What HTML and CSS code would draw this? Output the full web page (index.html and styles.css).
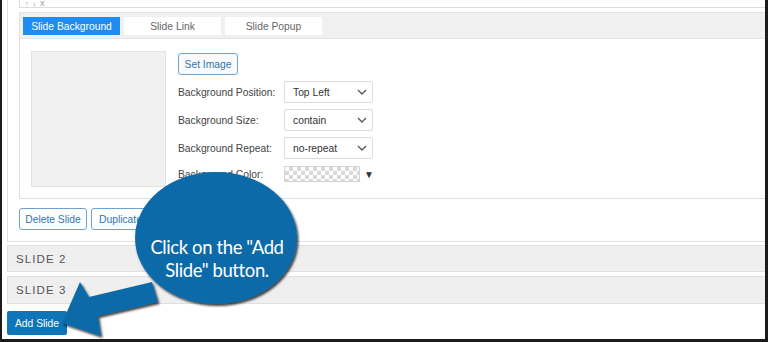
FILE: index.html
```html
<!DOCTYPE html>
<html>
<head>
<meta charset="utf-8">
<link rel="stylesheet" href="styles.css">
</head>
<body>
<div class="frame">
  <div class="panel">
    <div class="topbox"><span class="topicons">↑ ↓ X</span></div>
    <div class="tabs">
      <div class="tab active">Slide Background</div>
      <div class="tab">Slide Link</div>
      <div class="tab">Slide Popup</div>
    </div>
    <div class="content">
      <div class="preview"></div>
      <div class="fields">
        <button class="btn setimg">Set Image</button>
        <div class="row"><span class="label">Background Position:</span><span class="select">Top Left<svg class="chev" width="10" height="6" viewBox="0 0 10 6"><path d="M1 1 L5 5 L9 1" fill="none" stroke="#555" stroke-width="1.3"/></svg></span></div>
        <div class="row"><span class="label">Background Size:</span><span class="select">contain<svg class="chev" width="10" height="6" viewBox="0 0 10 6"><path d="M1 1 L5 5 L9 1" fill="none" stroke="#555" stroke-width="1.3"/></svg></span></div>
        <div class="row"><span class="label">Background Repeat:</span><span class="select">no-repeat<svg class="chev" width="10" height="6" viewBox="0 0 10 6"><path d="M1 1 L5 5 L9 1" fill="none" stroke="#555" stroke-width="1.3"/></svg></span></div>
        <div class="row colorrow"><span class="label">Background Color:</span><span class="swatch"></span><span class="tri">▼</span></div>
      </div>
    </div>
    <div class="actions">
      <button class="btn del">Delete Slide</button>
      <button class="btn">Duplicate Slide</button>
    </div>
  </div>
  <div class="slidebar">SLIDE 2</div>
  <div class="slidebar s3">SLIDE 3</div>
  <button class="addslide">Add Slide</button>

  <svg class="callout" width="768" height="342" viewBox="0 0 768 342">
    <defs>
      <filter id="sh" x="-20%" y="-20%" width="140%" height="140%">
        <feDropShadow dx="1.5" dy="2" stdDeviation="1.2" flood-color="#000" flood-opacity="0.75"/>
      </filter>
    </defs>
    <g filter="url(#sh)" fill="#0b6ba8">
      <polygon points="62,323 80,282 89,297 152,282 158,302 98,316 101,336"/>
      <ellipse cx="216" cy="238" rx="81" ry="66"/>
    </g>
  </svg>
  <div class="callout-text">Click on the "Add<br>Slide" button.</div>
</div>
</body>
</html>
```
FILE: styles.css
```css
* { box-sizing: border-box; }
html, body { margin: 0; padding: 0; background: #fff; }
body { font-family: "Liberation Sans", Arial, sans-serif; font-size: 10px; color: #444; }

.frame {
  position: relative;
  width: 768px;
  height: 342px;
  border-left: 2px solid #1b1b1b;
  border-right: 3px solid #1b1b1b;
  border-bottom: 3px solid #1b1b1b;
  overflow: hidden;
  background: #fff;
}

.panel {
  margin-left: 5px;
  width: 780px;
  border: 1px solid #e2e2e2;
  border-top: none;
  padding: 0 0 11px 11px;
}

.topbox {
  height: 8px;
  border: 1px solid #dcdcdc;
  border-top: none;
  overflow: hidden;
  padding-left: 5px;
}
.topicons {
  display: block;
  line-height: 7px;
  font-size: 7px;
  color: #888;
  letter-spacing: 1px;
}

.tabs {
  margin-top: 4px;
  height: 27px;
  background: #f0f0f0;
  border: 1px solid #e3e3e3;
  padding: 4px 3px;
  display: flex;
  gap: 4px;
}
.tab {
  width: 97px;
  height: 18px;
  background: #fff;
  color: #666;
  display: flex;
  align-items: center;
  justify-content: center;
  font-size: 10.3px;
}
.tab.active { background: #1e8cf0; color: #fff; }

.content {
  border-left: 1px solid #dedede;
  border-bottom: 1px solid #dedede;
  padding: 12px 0 11px 11px;
  display: flex;
  gap: 12px;
}
.preview {
  width: 135px;
  height: 136px;
  background: #f1f1f1;
  border: 1px solid #e2e2e2;
}
.fields {
  padding-top: 2px;
  display: flex;
  flex-direction: column;
  align-items: flex-start;
  gap: 6px;
}
.btn {
  font-family: "Liberation Sans", Arial, sans-serif;
  font-size: 10.3px;
  height: 22px;
  padding: 0 7px;
  background: #fff;
  color: #2b74b3;
  border: 1px solid #6fa3cf;
  border-radius: 3px;
  margin: 0;
}
.setimg { width: 60px; padding: 0; background: #fafafa; }
.del { width: 68px; padding: 0; }

.row {
  display: flex;
  align-items: center;
  height: 22px;
}
.label { width: 106px; color: #444; font-size: 10.3px; }
.select {
  width: 89px;
  height: 22px;
  border: 1px solid #dcdcdc;
  border-radius: 2px;
  padding-left: 8px;
  padding-right: 5px;
  color: #333;
  font-size: 10.3px;
  display: flex;
  align-items: center;
  justify-content: space-between;
}
.colorrow { height: 18px; }
.swatch {
  width: 76px;
  height: 16px;
  border: 1px solid #d4d4d4;
  background-color: #fff;
  background-image: repeating-conic-gradient(#d8d8d8 0 25%, #fff 0 50%);
  background-size: 8px 8px;
}
.tri { font-size: 10px; color: #333; margin-left: 4px; }

.actions {
  margin-top: 9px;
  display: flex;
  gap: 4px;
}

.slidebar {
  margin: 3px 0 0 5px;
  width: 780px;
  height: 27px;
  background: #efefef;
  border: 1px solid #e0e0e0;
  padding-left: 8px;
  display: flex;
  align-items: center;
  font-size: 11.5px;
  letter-spacing: 1.1px;
  color: #555;
}
.slidebar.s3 { margin-top: 4px; height: 28px; }

.addslide {
  display: block;
  margin: 7px 0 0 5px;
  width: 60px;
  height: 24px;
  background: #0e75b9;
  color: #fff;
  border: none;
  border-radius: 2px;
  font-family: "Liberation Sans", Arial, sans-serif;
  font-size: 10.3px;
  padding: 0;
}

.callout {
  position: absolute;
  left: -2px;
  top: 0;
}
.callout-text {
  position: absolute;
  left: 131px;
  top: 236px;
  width: 168px;
  text-align: center;
  font-family: Lato, "Open Sans", sans-serif;
  font-size: 18.5px;
  line-height: 23px;
  letter-spacing: -0.4px;
  color: #fff;
}
```
